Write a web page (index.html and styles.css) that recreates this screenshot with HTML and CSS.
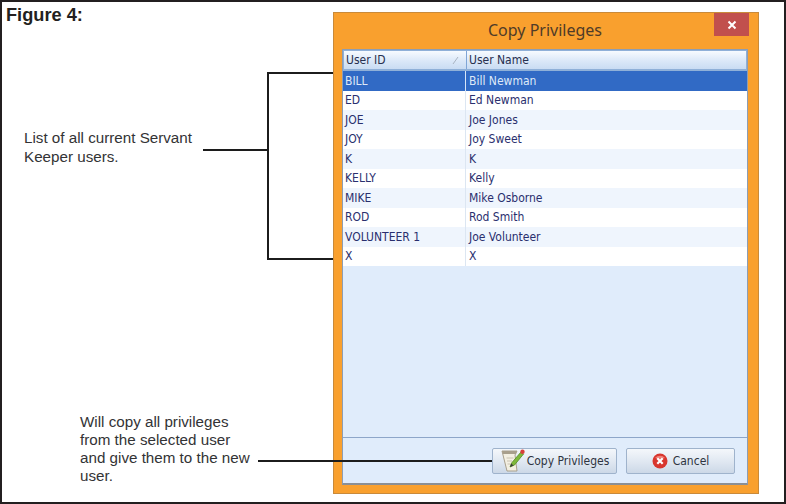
FILE: index.html
```html
<!DOCTYPE html>
<html lang="en">
<head>
<meta charset="utf-8">
<title>Figure 4: Copy Privileges</title>
<link rel="stylesheet" href="styles.css">
</head>
<body>
<main class="figure">
  <h1 class="figure-title">Figure 4:</h1>
  <p class="note note-users">List of all current Servant<br>Keeper users.</p>
  <p class="note note-copy">Will copy all privileges<br>from the selected user<br>and give them to the new<br>user.</p>

  <section class="dialog">
    <header class="titlebar">
      <span class="title">Copy Privileges</span>
      <span class="close">
        <svg width="10" height="10" viewBox="0 0 10 10"><path d="M1.5 1.5l7 7M8.500 1.500l-7 7" stroke="#fff" stroke-width="2" fill="none"/></svg>
      </span>
    </header>
    <div class="body">
      <div class="grid">
        <div class="head">
          <div class="cell head-id">User ID
            <svg class="sort" width="7" height="9" viewBox="0 0 7 9"><path d="M1 8L6 1" stroke="#a9b4c2" stroke-width="1" fill="none"/></svg>
          </div>
          <div class="cell head-name">User Name</div>
        </div>
        <div class="row selected"><div class="cell id">BILL</div><div class="cell name">Bill Newman</div></div>
        <div class="row"><div class="cell id">ED</div><div class="cell name">Ed Newman</div></div>
        <div class="row alt"><div class="cell id">JOE</div><div class="cell name">Joe Jones</div></div>
        <div class="row"><div class="cell id">JOY</div><div class="cell name">Joy Sweet</div></div>
        <div class="row alt"><div class="cell id">K</div><div class="cell name">K</div></div>
        <div class="row"><div class="cell id">KELLY</div><div class="cell name">Kelly</div></div>
        <div class="row alt"><div class="cell id">MIKE</div><div class="cell name">Mike Osborne</div></div>
        <div class="row"><div class="cell id">ROD</div><div class="cell name">Rod Smith</div></div>
        <div class="row alt"><div class="cell id">VOLUNTEER 1</div><div class="cell name">Joe Volunteer</div></div>
        <div class="row"><div class="cell id">X</div><div class="cell name">X</div></div>
      </div>
      <footer class="actions">
        <button class="btn btn-copy" type="button">
          <svg width="26" height="24" viewBox="0 0 24 24">
            <path d="M1 2h15l-2 4 2 16H6z" fill="#f3efe2" stroke="#a89f8c" stroke-width="1"/>
            <path d="M1 2h15l-1 3H2z" fill="#a89f8c"/>
            <path d="M5.500 9h7M6 12h5M6.500 15h4" stroke="#c9c2b2" stroke-width="1"/>
            <path d="M9 18l2-4.500 9-10.500 2.500 2-9 11z" fill="#7fb83a" stroke="#4f8a1f" stroke-width=".8"/>
            <path d="M9 18l1.200-3.500 2.300 2z" fill="#3d3d3d"/>
            <circle cx="21.500" cy="2.800" r="2.200" fill="#d9403a"/>
          </svg>
          <span>Copy Privileges</span>
        </button>
        <button class="btn btn-cancel" type="button">
          <svg width="16" height="16" viewBox="0 0 16 16">
            <circle cx="8" cy="8" r="7.500" fill="#d8362e"/>
            <path d="M3 5a6 5 0 0 1 10 0 12 8 0 0 1-10 0z" fill="#ef8078"/>
            <path d="M5.300 5.300l5.400 5.400M10.700 5.300l-5.400 5.400" stroke="#fff" stroke-width="2.200" fill="none"/>
          </svg>
          <span>Cancel</span>
        </button>
      </footer>
    </div>
  </section>

  <svg class="leaders" width="782" height="500" viewBox="0 0 782 500">
    <path d="M331 71H266V257H331M201 148H266M256 459H490" fill="none" stroke="#1c1c1c" stroke-width="2"/>
  </svg>
</main>
</body>
</html>
```
FILE: styles.css
```css
* { box-sizing: border-box; }
html, body { margin: 0; padding: 0; background: #fff; }
body { width: 786px; height: 504px; overflow: hidden; }

.figure {
  position: relative;
  width: 786px;
  height: 504px;
  border: 2px solid #231f20;
  background: #fff;
  font-family: "Liberation Sans", Arial, sans-serif;
  color: #333335;
}
.figure-title {
  position: absolute;
  left: 4px;
  top: 3px;
  margin: 0;
  font-size: 18.200px;
  line-height: 20px;
  font-weight: 700;
  color: #231f20;
}
.note {
  position: absolute;
  margin: 0;
  font-size: 15.200px;
  line-height: 18px;
}
.note-users { left: 22px; top: 126px; line-height: 19px; }
.note-copy { left: 78px; top: 411px; }

.dialog {
  position: absolute;
  left: 331px;
  top: 10px;
  width: 426px;
  height: 482px;
  display: flex;
  flex-direction: column;
  background: #f9a02e;
  border: 1px solid #c98a3a;
  font-family: "Noto Sans", Tahoma, sans-serif;
}
.titlebar {
  position: relative;
  height: 36px;
  flex: none;
  display: flex;
  align-items: center;
  justify-content: center;
  padding: 0 2px 3px 0;
}
.title { font-size: 16px; color: #4f3b28; }
.close {
  position: absolute;
  right: 9px;
  top: 0;
  width: 35px;
  height: 23px;
  background: #c1504d;
  display: flex;
  align-items: center;
  justify-content: center;
}
.body {
  flex: none;
  margin: 0 10px 0 8px;
  height: 436px;
  display: flex;
  flex-direction: column;
  background: #e0ecfb;
  border: 1px solid #8d9db3;
  border-bottom: 2px solid #8b8f94;
}
.grid {
  flex: 1;
  font-family: "DejaVu Sans Condensed", "DejaVu Sans", sans-serif;
  font-stretch: condensed;
  font-size: 12px;
  color: #2a2f6e;
}
.head, .row { display: grid; grid-template-columns: 122px 1fr; }
.head {
  height: 21px;
  background: linear-gradient(#f7fbff, #dbe8f8 55%, #c9dcf3);
  border: 1px solid #8fb0d8;
  border-bottom-width: 2px;
  color: #27304f;
}
.row { height: 19.500px; background: #fff; }
.row.alt { background: #eff5fd; }
.row.selected { background: #316ac5; color: #dfe9f8; }
.cell {
  position: relative;
  display: flex;
  align-items: center;
  padding-left: 2px;
  white-space: nowrap;
}
.name { border-left: 1px solid #dce6f2; padding-left: 3px; }
.selected .name { border-left-color: #d8e6f8; }
.head-name { border-left: 1px solid #7fa5d6; padding-left: 2px; }
.sort { position: absolute; right: 7px; top: 5px; }

.actions {
  flex: none;
  height: 46px;
  display: flex;
  justify-content: flex-end;
  gap: 9px;
  padding: 10px 12px 0 0;
  border-top: 1px solid #8ea6c9;
}
.btn {
  height: 26px;
  display: flex;
  align-items: center;
  justify-content: center;
  padding: 0;
  background: linear-gradient(#f4f7fb, #dfe7f1 55%, #ccd8e7);
  border: 1px solid #9fb3cc;
  border-radius: 2px;
  font-family: "DejaVu Sans Condensed", "DejaVu Sans", sans-serif;
  font-stretch: condensed;
  font-size: 12px;
  color: #2e3440;
}
.btn-copy { width: 125px; gap: 1px; }
.btn-cancel { width: 109px; gap: 5px; }

.leaders { position: absolute; left: 0; top: 0; pointer-events: none; }
```
